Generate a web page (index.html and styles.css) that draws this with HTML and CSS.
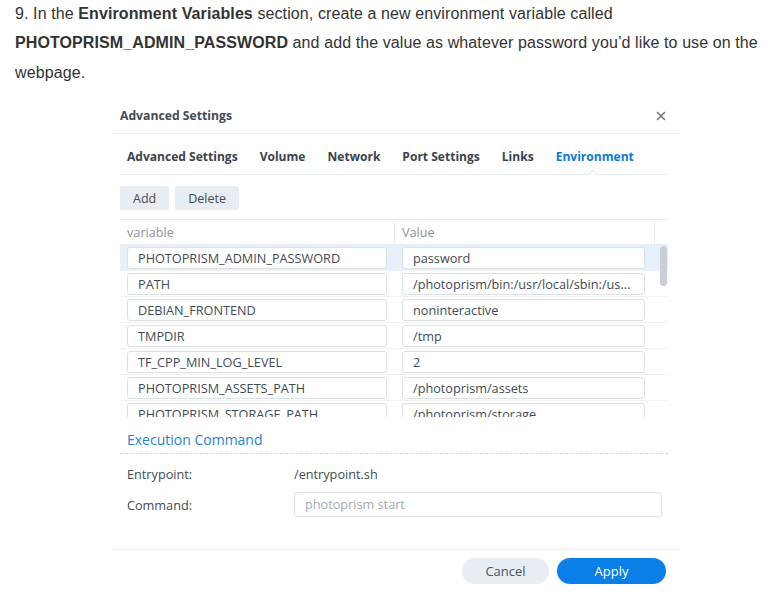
FILE: index.html
```html
<!DOCTYPE html>
<html lang="en">
<head>
  <meta charset="UTF-8">
  <title>Environment Variables</title>
  <link rel="stylesheet" href="styles.css">
</head>
<body>
<p class="stepText">9. In the <b>Environment Variables</b> section, create a new environment variable called <b>PHOTOPRISM_ADMIN_PASSWORD</b> and add the value as whatever password you’d like to use on the webpage.</p>

<main class="dialog">
  <div class="dialogTitle">
    <span>Advanced Settings</span>
    <svg class="closeIcon" width="10" height="10" viewBox="0 0 10 10"><path d="M1 1L9 9M9 1L1 9" stroke="#6b737c" stroke-width="1.5"/></svg>
  </div>

  <div class="dialogBody">
    <nav class="tabRow">
      <span class="tab">Advanced Settings</span>
      <span class="tab">Volume</span>
      <span class="tab">Network</span>
      <span class="tab">Port Settings</span>
      <span class="tab">Links</span>
      <span class="tab active">Environment</span>
    </nav>

    <div class="toolbar">
      <button class="toolButton">Add</button>
      <button class="toolButton">Delete</button>
    </div>

    <section class="envTable">
      <div class="envHead">
        <div class="colVar">variable</div>
        <div class="colVal">Value</div>
        <div class="colScroll"></div>
      </div>
      <div class="envBody">
        <div class="envRow selected">
          <div class="colVar"><div class="cellBox">PHOTOPRISM_ADMIN_PASSWORD</div></div>
          <div class="colVal"><div class="cellBox">password</div></div>
        </div>
        <div class="envRow">
          <div class="colVar"><div class="cellBox">PATH</div></div>
          <div class="colVal"><div class="cellBox">/photoprism/bin:/usr/local/sbin:/usr/local/bin:/usr/sbin</div></div>
        </div>
        <div class="envRow">
          <div class="colVar"><div class="cellBox">DEBIAN_FRONTEND</div></div>
          <div class="colVal"><div class="cellBox">noninteractive</div></div>
        </div>
        <div class="envRow">
          <div class="colVar"><div class="cellBox">TMPDIR</div></div>
          <div class="colVal"><div class="cellBox">/tmp</div></div>
        </div>
        <div class="envRow">
          <div class="colVar"><div class="cellBox">TF_CPP_MIN_LOG_LEVEL</div></div>
          <div class="colVal"><div class="cellBox">2</div></div>
        </div>
        <div class="envRow">
          <div class="colVar"><div class="cellBox">PHOTOPRISM_ASSETS_PATH</div></div>
          <div class="colVal"><div class="cellBox">/photoprism/assets</div></div>
        </div>
        <div class="envRow">
          <div class="colVar"><div class="cellBox">PHOTOPRISM_STORAGE_PATH</div></div>
          <div class="colVal"><div class="cellBox">/photoprism/storage</div></div>
        </div>
        <div class="scrollThumb"></div>
      </div>
    </section>

    <h3 class="sectionTitle">Execution Command</h3>
    <div class="formRow">
      <span class="formLabel">Entrypoint:</span>
      <span class="formValue">/entrypoint.sh</span>
    </div>
    <div class="formRow">
      <span class="formLabel">Command:</span>
      <div class="formInput">photoprism start</div>
    </div>
  </div>

  <footer class="dialogFooter">
    <button class="pillButton cancel">Cancel</button>
    <button class="pillButton apply">Apply</button>
  </footer>
</main>
</body>
</html>
```

FILE: styles.css
```css
:root {
  --textColor: #414b55;
  --lineColor: #e9edf1;
  --blueColor: #0b78d8;
  --buttonGray: #e8edf3;
}
body {
  margin: 0;
  background: #fff;
}
.stepText {
  margin: 0;
  padding: 0 15px;
  font-family: "Liberation Sans", Arial, sans-serif;
  font-size: 16px;
  line-height: 29.5px;
  color: #333;
  margin-top: -1.5px;
  letter-spacing: 0.1px;
}
.dialog {
  margin: 11px 0 0 112px;
  width: 568px;
  font-family: "Open Sans", sans-serif;
  font-size: 12.7px;
  color: var(--textColor);
}
.dialogTitle {
  display: flex;
  justify-content: space-between;
  align-items: center;
  height: 35px;
  padding: 0 14px 0 8px;
  border-bottom: 1px solid var(--lineColor);
  font-weight: bold;
  font-size: 12.2px;
}
.dialogTitle span {
  margin-top: -1px;
}
.dialogBody {
  padding: 0 12px 0 8px;
}
.tabRow {
  display: flex;
  gap: 22px;
  height: 40px;
  align-items: center;
  padding-left: 7px;
  border-bottom: 1px solid var(--lineColor);
  position: relative;
}
.tab {
  font-weight: bold;
  font-size: 12.05px;
  color: #3a434c;
  position: relative;
  height: 40px;
  line-height: 46px;
}
.tab.active {
  color: var(--blueColor);
}
.tab.active::after {
  content: "";
  position: absolute;
  left: 33px;
  bottom: -5px;
  width: 7px;
  height: 7px;
  background: #fff;
  border-top: 1px solid #dfe4e9;
  border-left: 1px solid #dfe4e9;
  transform: rotate(45deg);
}
.toolbar {
  display: flex;
  gap: 6px;
  padding-top: 11px;
  height: 24px;
}
.toolButton {
  border: none;
  background: var(--buttonGray);
  color: var(--textColor);
  font-family: "Open Sans", sans-serif;
  font-size: 12.5px;
  border-radius: 2px;
  height: 24px;
  padding: 0 13px;
}
.envTable {
  margin-top: 9px;
  border-top: 1px solid var(--lineColor);
}
.envHead {
  display: flex;
  height: 24px;
  align-items: stretch;
  border-bottom: 1px solid var(--lineColor);
  color: #8a939c;
}
.envHead > div {
  display: flex;
  align-items: center;
}
.colVar {
  width: 275px;
  padding-left: 7px;
  box-sizing: border-box;
}
.colVal {
  width: 260px;
  padding-left: 7px;
  box-sizing: border-box;
}
.envHead .colVar,
.envHead .colVal {
  border-right: 1px solid var(--lineColor);
}
.colScroll {
  flex: 1;
}
.envBody {
  height: 172px;
  overflow: hidden;
  position: relative;
}
.envRow {
  display: flex;
  height: 26px;
  align-items: center;
  border-bottom: 1px solid #f0f2f4;
  box-sizing: border-box;
}
.envRow.selected {
  background: #e6f0fb;
}
.envRow .colVar {
  padding-right: 8px;
}
.envRow .colVal {
  padding-right: 10px;
}
.cellBox {
  height: 22px;
  line-height: 21px;
  border: 1px solid #dce1e6;
  border-radius: 3px;
  background: #fff;
  padding: 0 10px;
  box-sizing: border-box;
  white-space: nowrap;
  overflow: hidden;
  text-overflow: ellipsis;
}
.scrollThumb {
  position: absolute;
  right: 1px;
  top: 1px;
  width: 7px;
  height: 40px;
  border-radius: 4px;
  background: #c9cfd5;
}
.sectionTitle {
  margin: 0;
  padding: 13px 0 0 7px;
  height: 23px;
  font-weight: normal;
  font-size: 14px;
  color: #2b7fd4;
  border-bottom: 1px dashed #d3d8dd;
}
.formRow {
  display: flex;
  align-items: center;
  height: 31px;
  padding-left: 7px;
}
.sectionTitle + .formRow {
  margin-top: 4px;
}
.formLabel {
  width: 167px;
}
.formInput {
  flex: 1;
  height: 25px;
  line-height: 23px;
  border: 1px solid #dce1e6;
  border-radius: 3px;
  padding: 0 10px;
  box-sizing: border-box;
  color: #a4abb2;
  margin-right: 6px;
}
.dialogFooter {
  margin-top: 29px;
  border-top: 1px solid #eceff2;
  display: flex;
  justify-content: flex-end;
  gap: 8px;
  padding: 8px 14px 0 0;
}
.pillButton {
  border: none;
  height: 26px;
  border-radius: 13px;
  font-family: "Open Sans", sans-serif;
  font-size: 13px;
}
.pillButton.cancel {
  width: 87px;
  background: var(--buttonGray);
  color: #4a545e;
}
.pillButton.apply {
  width: 109px;
  background: #0a7fe8;
  color: #fff;
}
```
